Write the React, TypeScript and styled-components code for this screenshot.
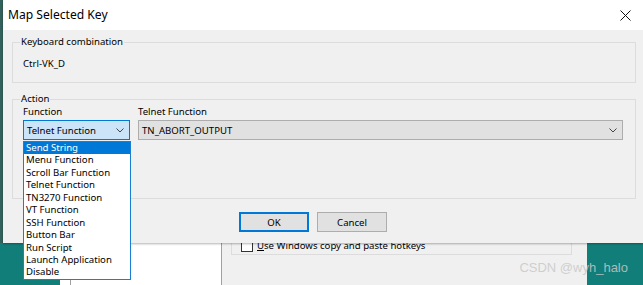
import React from "react";
import styled, { createGlobalStyle } from "styled-components";

const Global = createGlobalStyle`
  html, body { margin: 0; padding: 0; }
  body {
    width: 643px; height: 285px; overflow: hidden;
    font-family: "Noto Sans", "Open Sans", sans-serif;
    color: #000;
  }
  * { box-sizing: border-box; }
`;

const UI_FONT = 9.6;

const Desktop = styled.div`
  position: relative;
  width: 643px;
  height: 285px;
  overflow: hidden;
  background: #127e7a;
`;

const EdgeWindow = styled.div`
  position: absolute;
  left: 0;
  top: 0;
  width: 3px;
  height: 243px;
  background: #33615b;
`;

const BackWindow = styled.div`
  position: absolute;
  left: 60px;
  top: 190px;
  width: 527px;
  height: 95px;
  display: flex;
  background: #fff;
`;

const NavStrip = styled.div`
  width: 11px;
  background: #fff;
  border-right: 1px solid #a0a0a0;
`;

const ListPane = styled.div`
  width: 151px;
  background: #fff;
  border-right: 1px solid #a0a0a0;
`;

const SettingsPane = styled.div`
  flex: 1;
  background: #f0f0f0;
  padding: 20px 15px 0 9px;
`;

const SettingsGroup = styled.div`
  height: 45px;
  border: 1px solid #dcdcdc;
  display: flex;
  align-items: flex-end;
  padding: 0 0 2px 9px;
`;

const CheckRow = styled.label`
  display: flex;
  align-items: center;
  gap: 4px;
  font-size: ${UI_FONT}px;
  line-height: 12px;
`;

const CheckBox = styled.span`
  width: 12px;
  height: 12px;
  border: 1px solid #333;
  background: #fff;
`;

const Mnemonic = styled.span`
  text-decoration: underline;
`;

const Dialog = styled.div`
  position: absolute;
  left: 3px;
  top: 0;
  width: 640px;
  height: 243px;
  background: #f0f0f0;
  display: flex;
  flex-direction: column;
  box-shadow: 0 1px 2px rgba(0, 0, 0, 0.3);
`;

const TitleBar = styled.div`
  height: 30px;
  flex: none;
  background: #fff;
  display: flex;
  align-items: center;
  justify-content: space-between;
  padding: 0 12px 0 5px;
`;

const Title = styled.span`
  font-size: 12.1px;
  line-height: 14px;
`;

const CloseIcon = styled.svg`
  width: 11px;
  height: 11px;
  display: block;
`;

const Client = styled.div`
  flex: 1;
  display: flex;
  flex-direction: column;
  padding: 0 7px 0 9px;
`;

const Group = styled.fieldset<{ $mt: number; $h: number }>`
  margin: ${(p) => p.$mt}px 0 0 0;
  height: ${(p) => p.$h}px;
  border: 1px solid #dcdcdc;
  padding: 0 12px 0 10px;
  min-width: 0;
`;

const Legend = styled.legend`
  font-size: ${UI_FONT}px;
  line-height: 12px;
  padding: 0 1px;
  margin-left: -3px;
`;

const PlainText = styled.div<{ $pt: number }>`
  font-size: ${UI_FONT}px;
  line-height: 12px;
  padding-top: ${(p) => p.$pt}px;
`;

const ActionGrid = styled.div`
  display: grid;
  grid-template-columns: 107px 1fr;
  column-gap: 8px;
  row-gap: 2px;
  padding-top: 1px;
`;

const FieldLabel = styled.div`
  font-size: ${UI_FONT}px;
  line-height: 12px;
`;

const ComboWrap = styled.div`
  position: relative;
`;

const Combo = styled.div<{ $active?: boolean }>`
  height: 20px;
  display: flex;
  align-items: center;
  justify-content: space-between;
  padding: 0 5px 0 3px;
  font-size: ${UI_FONT}px;
  border: 1px solid ${(p) => (p.$active ? "#0078d7" : "#adadad")};
  background: ${(p) => (p.$active ? "#cce4f7" : "#e1e1e1")};
`;

const Chevron = styled.svg`
  width: 8px;
  height: 5px;
  display: block;
`;

const DropList = styled.ul`
  position: absolute;
  top: calc(100% + 1px);
  left: 0;
  width: 108px;
  margin: 0;
  padding: 0;
  list-style: none;
  background: #fff;
  border: 1px solid #1a7fd4;
  z-index: 5;
`;

const DropItem = styled.li<{ $selected?: boolean }>`
  font-size: ${UI_FONT}px;
  line-height: 12.45px;
  height: 12.45px;
  padding-left: 2px;
  white-space: nowrap;
  background: ${(p) => (p.$selected ? "#0078d7" : "transparent")};
  color: ${(p) => (p.$selected ? "#fff" : "#000")};
`;

const ButtonRow = styled.div`
  display: flex;
  gap: 8px;
  margin: 13px 0 0 227px;
`;

const Button = styled.button<{ $default?: boolean }>`
  width: 70px;
  height: 20px;
  margin: 0;
  padding: 0;
  font-family: inherit;
  font-size: ${UI_FONT}px;
  color: #000;
  background: #e1e1e1;
  border: ${(p) => (p.$default ? "2px solid #0078d7" : "1px solid #adadad")};
`;

const Watermark = styled.div`
  position: absolute;
  right: 15px;
  bottom: 9px;
  font-family: "Liberation Sans", Arial, sans-serif;
  font-size: 13px;
  line-height: 16px;
  color: rgba(200, 200, 200, 0.85);
  z-index: 10;
`;

const functions = [
  "Send String",
  "Menu Function",
  "Scroll Bar Function",
  "Telnet Function",
  "TN3270 Function",
  "VT Function",
  "SSH Function",
  "Button Bar",
  "Run Script",
  "Launch Application",
  "Disable",
];

const ChevronDown = () => (
  <Chevron viewBox="0 0 8 5">
    <path d="M0.5 0.5 L4 4 L7.5 0.5" fill="none" stroke="#444" strokeWidth="1" />
  </Chevron>
);

export default function App() {
  return (
    <>
      <Global />
      <Desktop>
        <EdgeWindow />
        <BackWindow>
          <NavStrip />
          <ListPane />
          <SettingsPane>
            <SettingsGroup>
              <CheckRow>
                <CheckBox />
                <span>
                  <Mnemonic>U</Mnemonic>se Windows copy and paste hotkeys
                </span>
              </CheckRow>
            </SettingsGroup>
          </SettingsPane>
        </BackWindow>

        <Dialog>
          <TitleBar>
            <Title>Map Selected Key</Title>
            <CloseIcon viewBox="0 0 11 11">
              <path d="M0.5 0.5 L10.5 10.5 M10.5 0.5 L0.5 10.5" stroke="#111" strokeWidth="1" />
            </CloseIcon>
          </TitleBar>
          <Client>
            <Group $mt={6} $h={47}>
              <Legend>Keyboard combination</Legend>
              <PlainText $pt={10}>Ctrl-VK_D</PlainText>
            </Group>
            <Group $mt={10} $h={106}>
              <Legend>Action</Legend>
              <ActionGrid>
                <FieldLabel>Function</FieldLabel>
                <FieldLabel>Telnet Function</FieldLabel>
                <ComboWrap>
                  <Combo $active>
                    <span>Telnet Function</span>
                    <ChevronDown />
                  </Combo>
                  <DropList>
                    {functions.map((f, i) => (
                      <DropItem key={f} $selected={i === 0}>
                        {f}
                      </DropItem>
                    ))}
                  </DropList>
                </ComboWrap>
                <Combo>
                  <span>TN_ABORT_OUTPUT</span>
                  <ChevronDown />
                </Combo>
              </ActionGrid>
            </Group>
            <ButtonRow>
              <Button $default>OK</Button>
              <Button>Cancel</Button>
            </ButtonRow>
          </Client>
        </Dialog>

        <Watermark>CSDN @wyh_halo</Watermark>
      </Desktop>
    </>
  );
}
